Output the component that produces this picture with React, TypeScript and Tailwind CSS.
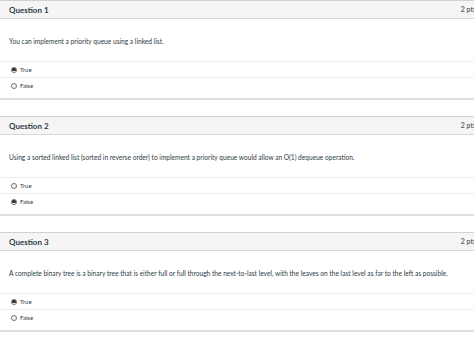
const questions = [
  {
    title: "Question 1",
    text: "You can implement a priority queue using a linked list.",
    answer: "True",
  },
  {
    title: "Question 2",
    text: "Using a sorted linked list (sorted in reverse order) to implement a priority queue would allow an O(1) dequeue operation.",
    answer: "False",
  },
  {
    title: "Question 3",
    text: "A complete binary tree is a binary tree that is either full or full through the next-to-last level, with the leaves on the last level as far to the left as possible.",
    answer: "True",
  },
];

function Radio({ checked }: { checked: boolean }) {
  return (
    <span className="flex h-[6px] w-[6px] items-center justify-center rounded-full border border-[#6b6b6b] bg-white">
      {checked && <span className="h-[3.5px] w-[3.5px] rounded-full bg-[#2b2b2b]" />}
    </span>
  );
}

export default function App() {
  return (
    <div className="h-[338px] w-[474px] overflow-hidden bg-white font-['Lato',sans-serif] text-[#2d3b45]">
      <div className="w-[485px]">
        {questions.map(q => (
          <div
            key={q.title}
            className="mb-[16px] border-t border-b-2 border-t-[#cfd3d6] border-b-[#dedede]"
          >
            <div className="flex h-[18px] items-center justify-between border-b border-[#d9d9d9] bg-[#f5f5f5] px-[9px]">
              <span className="text-[8px] font-bold">{q.title}</span>
              <span className="text-[7px] font-semibold text-[#555]">2 pts</span>
            </div>
            <div className="px-[9px] pt-[18px] pb-[15px] text-[6.6px] leading-[9px]">
              {q.text}
            </div>
            <div className="pb-[5px]">
              {["True", "False"].map(opt => (
                <div
                  key={opt}
                  className="flex h-[16px] items-center gap-[3px] border-t border-[#ececec] pl-[11px] text-[6px]"
                >
                  <Radio checked={opt === q.answer} />
                  <span>{opt}</span>
                </div>
              ))}
            </div>
          </div>
        ))}
      </div>
    </div>
  );
}
